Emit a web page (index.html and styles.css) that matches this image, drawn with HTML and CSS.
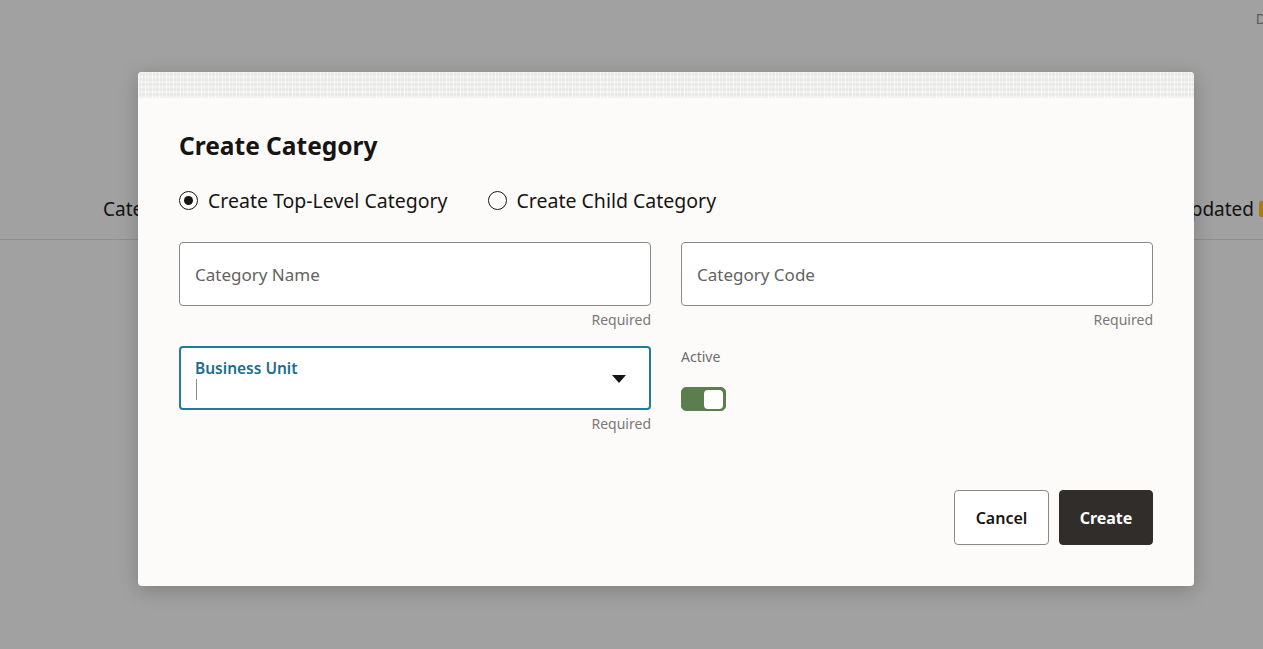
FILE: index.html
```html
<!DOCTYPE html>
<html lang="en">
<head>
    <meta charset="UTF-8">
    <meta name="viewport" content="width=device-width, initial-scale=1.0">
    <title>Create Category</title>
    <link rel="stylesheet" href="styles.css">
</head>
<body>

    <!-- page behind the modal -->
    <div class="page">
        <div class="topbar"><span class="top-link">Done</span></div>
        <div class="tabs">
            <span class="tab-title">Categories</span>
            <span class="tab-updated">Last Updated<span class="updated-mark"></span></span>
        </div>
    </div>

    <div class="dialog">
        <div class="dialog-header"></div>
        <div class="dialog-body">
            <h2>Create Category</h2>

            <div class="radio-row">
                <label class="radio checked"><span class="dot"></span>Create Top-Level Category</label>
                <label class="radio"><span class="dot"></span>Create Child Category</label>
            </div>

            <div class="form-grid">
                <div class="field">
                    <div class="input-box"><span class="placeholder">Category Name</span></div>
                    <div class="hint">Required</div>
                </div>
                <div class="field">
                    <div class="input-box"><span class="placeholder">Category Code</span></div>
                    <div class="hint">Required</div>
                </div>
                <div class="field">
                    <div class="input-box focused">
                        <div class="select-inner">
                            <span class="float-label">Business Unit</span>
                            <span class="caret"></span>
                        </div>
                        <svg class="dropdown" width="14" height="8" viewBox="0 0 14 8"><path d="M0 0h14L7 8z" fill="#161513"/></svg>
                    </div>
                    <div class="hint">Required</div>
                </div>
                <div class="field switch-field">
                    <span class="switch-label">Active</span>
                    <span class="switch"><span class="knob"></span></span>
                </div>
            </div>

            <div class="actions">
                <button class="btn btn-outline">Cancel</button>
                <button class="btn btn-primary">Create</button>
            </div>
        </div>
    </div>

</body>
</html>
```

FILE: styles.css
```css
/* page + overlay */
body { margin: 0; font-family: 'Noto Sans', 'Open Sans', sans-serif; background-color: #a1a1a1; color: #161513; height: 649px; overflow: hidden; }
.page { width: 100%; }
.topbar { height: 30px; display: flex; justify-content: flex-end; align-items: center; overflow: hidden; }
.top-link { font-size: 14px; color: #5a5a5a; margin-right: -28px; margin-top: 7px; }
.tabs { margin-top: 167px; height: 43px; padding-bottom: 20px; box-sizing: border-box; border-bottom: 1px solid #8e8e8e; display: flex; justify-content: space-between; align-items: flex-end; padding-left: 103px; overflow: hidden; white-space: nowrap; }
.tab-title { font-size: 19px; line-height: 20px; color: #121212; }
.tab-updated { font-size: 19px; line-height: 20px; color: #121212; margin-right: -4px; display: flex; align-items: center; }
.updated-mark { display: inline-block; width: 8px; height: 16px; margin-left: 5px; background: #a87a12; border-radius: 2px; }

/* dialog */
.dialog { position: absolute; left: 138px; top: 72px; width: 1056px; height: 514px; background-color: #fcfbfa; border-radius: 4px; overflow: hidden; box-shadow: 0 4px 20px rgba(0,0,0,0.22); }
.dialog-header { height: 26px; background-color: #e9e9e8;
    background-image:
        repeating-linear-gradient(90deg, rgba(255,255,255,0.6) 0 1px, transparent 1px 3px, rgba(255,255,255,0.35) 3px 4px, transparent 4px 7px),
        repeating-linear-gradient(0deg, rgba(255,255,255,0.35) 0 2px, transparent 2px 5px); }
.dialog-body { padding: 32px 41px 41px; }
h2 { margin: 0; font-size: 24.5px; line-height: 32px; font-weight: 700; color: #161513; }

.radio-row { display: flex; gap: 40px; margin-top: 24px; height: 28px; align-items: center; }
.radio { display: flex; align-items: center; gap: 10px; font-size: 19.5px; color: #161513; }
.radio .dot { width: 17px; height: 17px; border: 1.5px solid #161513; border-radius: 50%; box-sizing: content-box; position: relative; background: #fff; }
.radio.checked .dot::after { content: ''; position: absolute; left: 4px; top: 4px; width: 9px; height: 9px; border-radius: 50%; background: #161513; }

.form-grid { display: grid; grid-template-columns: 472px 472px; column-gap: 30px; row-gap: 15px; margin-top: 28px; }
.input-box { height: 64px; box-sizing: border-box; border: 1px solid #8b8987; border-radius: 4px; background: #fff; display: flex; align-items: center; padding: 0 15px; }
.placeholder { font-size: 17px; color: #65635f; }
.hint { text-align: right; font-size: 14px; line-height: 22px; color: #7a7876; margin-top: 3px; }
.input-box.focused { border: 2px solid #227b9d; padding: 0 23px 0 14px; justify-content: space-between; }
.select-inner { display: flex; flex-direction: column; align-self: flex-start; padding-top: 10px; }
.float-label { font-size: 15.5px; font-weight: 600; color: #1b6d8c; line-height: 20px; }
.caret { width: 1px; height: 21px; background: #8a8886; margin-top: 1px; margin-left: 1px; }
.dropdown { margin-top: 1px; }

.switch-field { display: flex; flex-direction: column; align-items: flex-start; }
.switch-label { font-size: 14px; color: #6f6d6b; line-height: 20px; margin-top: 1px; }
.switch { margin-top: 20px; width: 45px; height: 24px; box-sizing: border-box; border-radius: 5px; background: #5c7d4d; border: 1px solid #5c7d4d; display: flex; justify-content: flex-end; align-items: center; padding-right: 2px; }
.knob { width: 19px; height: 19px; border-radius: 4px; background: #fff; }

.actions { display: flex; justify-content: flex-end; gap: 10px; margin-top: 55px; }
.btn { height: 55px; border-radius: 4px; font-family: 'Noto Sans', 'Open Sans', sans-serif; font-size: 16px; font-weight: 700; padding: 0; cursor: pointer; }
.btn-outline { width: 95px; background: #fff; border: 1px solid #8b8987; color: #161513; font-weight: 600; }
.btn-primary { width: 94px; background: #312d2a; border: 1px solid #312d2a; color: #fff; }
```
